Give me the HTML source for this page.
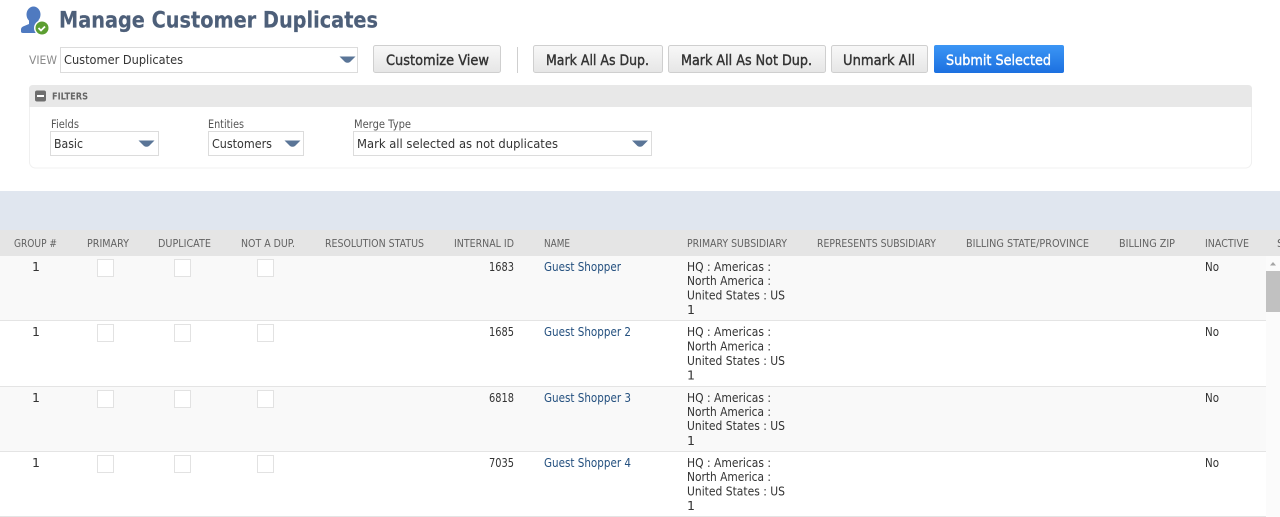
<!DOCTYPE html>
<html><head><meta charset="utf-8"><title>Manage Customer Duplicates</title>
<style>
html,body{margin:0;padding:0;background:#fff;width:1280px;height:517px;overflow:hidden}
svg{display:block}
text{font-family:"DejaVu Sans","Liberation Sans",sans-serif;font-size:12.5px;fill:#333}
.h{font-size:11px;fill:#626262}
.l{fill:#24507f}
.b{font-size:14px;fill:#333;stroke:#333;stroke-width:.4}
.cb{fill:#fff;stroke:#e2e2e2}
</style></head><body>
<svg xmlns="http://www.w3.org/2000/svg" width="1280" height="517" viewBox="0 0 1280 517">
<defs>
<linearGradient id="g" x1="0" y1="0" x2="0" y2="1"><stop offset="0" stop-color="#f8f8f8"/><stop offset="1" stop-color="#e6e6e6"/></linearGradient>
<linearGradient id="bl" x1="0" y1="0" x2="0" y2="1"><stop offset="0" stop-color="#3c96f5"/><stop offset="1" stop-color="#1c70e0"/></linearGradient>
</defs>
<!-- icon -->
<ellipse cx="33.500" cy="14.500" rx="7" ry="8" fill="#4f7ac0"/>
<path d="M29 19h9l1 4 5 2v6.500q0 1.500-2 1.500H23q-2 0-2-1.500v-2q0-2 2-3l6-2.500z" fill="#4f7ac0"/>
<circle cx="42" cy="28" r="8" fill="#fff"/>
<circle cx="42" cy="28" r="6.500" fill="#5c9e31"/>
<path d="M38.500 28l2.500 2.500 4-4" fill="none" stroke="#fff" stroke-width="1.800"/>
<text x="59" y="27.500" textLength="319" lengthAdjust="spacingAndGlyphs" style="font-size:22.500px;font-weight:bold;fill:#4d5f79;stroke:#4d5f79;stroke-width:.2">Manage Customer Duplicates</text>

<!-- toolbar -->
<text x="29" y="64" textLength="28" lengthAdjust="spacingAndGlyphs" style="fill:#8a8a8a;font-size:11.500px">VIEW</text>
<rect x="60.500" y="47.500" width="297" height="25" fill="#fff" stroke="#dcdcdc"/>
<text x="64" y="64" textLength="119" lengthAdjust="spacingAndGlyphs">Customer Duplicates</text>
<path d="M339.500 56.500h16l-5.500 5.500q-2.500 1.500-5 0z" fill="#5a7597"/>
<rect x="373.500" y="45.500" width="127" height="27" rx="2" fill="url(#g)" stroke="#cfcfcf"/>
<text class="b" x="386" y="65" textLength="103" lengthAdjust="spacingAndGlyphs">Customize View</text>
<rect x="517" y="47" width="1" height="26" fill="#cfcfcf"/>
<rect x="533.500" y="45.500" width="129" height="27" rx="2" fill="url(#g)" stroke="#cfcfcf"/>
<text class="b" x="546" y="65" textLength="103" lengthAdjust="spacingAndGlyphs">Mark All As Dup.</text>
<rect x="668.500" y="45.500" width="157" height="27" rx="2" fill="url(#g)" stroke="#cfcfcf"/>
<text class="b" x="681" y="65" textLength="131" lengthAdjust="spacingAndGlyphs">Mark All As Not Dup.</text>
<rect x="831.500" y="45.500" width="96" height="27" rx="2" fill="url(#g)" stroke="#cfcfcf"/>
<text class="b" x="843" y="65" textLength="72" lengthAdjust="spacingAndGlyphs">Unmark All</text>
<rect x="934" y="45" width="130" height="28" rx="2" fill="url(#bl)"/>
<text class="b" x="946" y="65" textLength="105" lengthAdjust="spacingAndGlyphs" style="fill:#fff;stroke:#fff">Submit Selected</text>

<!-- filters -->
<rect x="29.500" y="90" width="1222" height="78" rx="6" fill="#fff" stroke="#f0f0f0"/>
<path d="M29 107V89q0-4 4-4h1215q4 0 4 4v18z" fill="#e8e8e8"/>
<rect x="35" y="90.500" width="11" height="11" rx="2" fill="#6e6e6e"/>
<rect x="37" y="95" width="7" height="2" fill="#fff"/>
<text x="52" y="99.500" textLength="36" lengthAdjust="spacingAndGlyphs" style="font-size:9.500px;font-weight:bold;fill:#666">FILTERS</text>
<text x="51" y="128" textLength="28" lengthAdjust="spacingAndGlyphs" style="font-size:11.500px;fill:#555">Fields</text>
<text x="208" y="128" textLength="36" lengthAdjust="spacingAndGlyphs" style="font-size:11.500px;fill:#555">Entities</text>
<text x="354" y="128" textLength="57" lengthAdjust="spacingAndGlyphs" style="font-size:11.500px;fill:#555">Merge Type</text>
<rect x="50.500" y="131.500" width="108" height="24" fill="#fff" stroke="#dcdcdc"/>
<text x="54" y="148" textLength="29" lengthAdjust="spacingAndGlyphs">Basic</text>
<path d="M138.500 140.500h16l-5.500 5.500q-2.500 1.500-5 0z" fill="#5a7597"/>
<rect x="208.500" y="131.500" width="95" height="24" fill="#fff" stroke="#dcdcdc"/>
<text x="212" y="148" textLength="60" lengthAdjust="spacingAndGlyphs">Customers</text>
<path d="M284.500 140.500h16l-5.500 5.500q-2.500 1.500-5 0z" fill="#5a7597"/>
<rect x="353.500" y="131.500" width="298" height="24" fill="#fff" stroke="#dcdcdc"/>
<text x="357" y="148" textLength="201" lengthAdjust="spacingAndGlyphs">Mark all selected as not duplicates</text>
<path d="M632 140.500h16l-5.500 5.500q-2.500 1.500-5 0z" fill="#5a7597"/>

<!-- band + header -->
<rect x="0" y="191" width="1280" height="39" fill="#e0e6ef"/>
<rect x="0" y="230" width="1280" height="26" fill="#e5e5e5"/>
<text class="h" x="14" y="247" textLength="43" lengthAdjust="spacingAndGlyphs">GROUP #</text>
<text class="h" x="87" y="247" textLength="42" lengthAdjust="spacingAndGlyphs">PRIMARY</text>
<text class="h" x="158" y="247" textLength="53" lengthAdjust="spacingAndGlyphs">DUPLICATE</text>
<text class="h" x="241" y="247" textLength="54" lengthAdjust="spacingAndGlyphs">NOT A DUP.</text>
<text class="h" x="325" y="247" textLength="99" lengthAdjust="spacingAndGlyphs">RESOLUTION STATUS</text>
<text class="h" x="454" y="247" textLength="60" lengthAdjust="spacingAndGlyphs">INTERNAL ID</text>
<text class="h" x="544" y="247" textLength="26" lengthAdjust="spacingAndGlyphs">NAME</text>
<text class="h" x="687" y="247" textLength="100" lengthAdjust="spacingAndGlyphs">PRIMARY SUBSIDIARY</text>
<text class="h" x="817" y="247" textLength="119" lengthAdjust="spacingAndGlyphs">REPRESENTS SUBSIDIARY</text>
<text class="h" x="966" y="247" textLength="123" lengthAdjust="spacingAndGlyphs">BILLING STATE/PROVINCE</text>
<text class="h" x="1119" y="247" textLength="56" lengthAdjust="spacingAndGlyphs">BILLING ZIP</text>
<text class="h" x="1205" y="247" textLength="44" lengthAdjust="spacingAndGlyphs">INACTIVE</text>
<text class="h" x="1277" y="247">S</text>

<!-- row backgrounds -->
<rect x="0" y="256" width="1266" height="64" fill="#f9f9f9"/>
<rect x="0" y="387" width="1266" height="64" fill="#f9f9f9"/>
<rect x="0" y="320" width="1266" height="1" fill="#e4e4e4"/>
<rect x="0" y="386" width="1266" height="1" fill="#e4e4e4"/>
<rect x="0" y="451" width="1266" height="1" fill="#e4e4e4"/>
<rect x="0" y="516" width="1266" height="1" fill="#e4e4e4"/>

<!-- row 1 -->
<text x="32" y="271">1</text>
<rect class="cb" x="97.500" y="259.500" width="16" height="17"/><rect class="cb" x="174.500" y="259.500" width="16" height="17"/><rect class="cb" x="257.500" y="259.500" width="16" height="17"/>
<text x="489" y="271" textLength="25" lengthAdjust="spacingAndGlyphs">1683</text>
<text class="l" x="544" y="271" textLength="77" lengthAdjust="spacingAndGlyphs">Guest Shopper</text>
<text x="687" y="271" textLength="84" lengthAdjust="spacingAndGlyphs">HQ : Americas :</text>
<text x="687" y="285" textLength="84" lengthAdjust="spacingAndGlyphs">North America :</text>
<text x="687" y="299.500" textLength="98" lengthAdjust="spacingAndGlyphs">United States : US</text>
<text x="687" y="314">1</text>
<text x="1205" y="271" textLength="14" lengthAdjust="spacingAndGlyphs">No</text>

<!-- row 2 -->
<text x="32" y="336">1</text>
<rect class="cb" x="97.500" y="324.500" width="16" height="17"/><rect class="cb" x="174.500" y="324.500" width="16" height="17"/><rect class="cb" x="257.500" y="324.500" width="16" height="17"/>
<text x="489" y="336" textLength="25" lengthAdjust="spacingAndGlyphs">1685</text>
<text class="l" x="544" y="336" textLength="87" lengthAdjust="spacingAndGlyphs">Guest Shopper 2</text>
<text x="687" y="336" textLength="84" lengthAdjust="spacingAndGlyphs">HQ : Americas :</text>
<text x="687" y="350.500" textLength="84" lengthAdjust="spacingAndGlyphs">North America :</text>
<text x="687" y="365" textLength="98" lengthAdjust="spacingAndGlyphs">United States : US</text>
<text x="687" y="379.500">1</text>
<text x="1205" y="336" textLength="14" lengthAdjust="spacingAndGlyphs">No</text>

<!-- row 3 -->
<text x="32" y="402">1</text>
<rect class="cb" x="97.500" y="390.500" width="16" height="17"/><rect class="cb" x="174.500" y="390.500" width="16" height="17"/><rect class="cb" x="257.500" y="390.500" width="16" height="17"/>
<text x="489" y="402" textLength="25" lengthAdjust="spacingAndGlyphs">6818</text>
<text class="l" x="544" y="402" textLength="87" lengthAdjust="spacingAndGlyphs">Guest Shopper 3</text>
<text x="687" y="402" textLength="84" lengthAdjust="spacingAndGlyphs">HQ : Americas :</text>
<text x="687" y="416" textLength="84" lengthAdjust="spacingAndGlyphs">North America :</text>
<text x="687" y="430" textLength="98" lengthAdjust="spacingAndGlyphs">United States : US</text>
<text x="687" y="445">1</text>
<text x="1205" y="402" textLength="14" lengthAdjust="spacingAndGlyphs">No</text>

<!-- row 4 -->
<text x="32" y="467">1</text>
<rect class="cb" x="97.500" y="455.500" width="16" height="17"/><rect class="cb" x="174.500" y="455.500" width="16" height="17"/><rect class="cb" x="257.500" y="455.500" width="16" height="17"/>
<text x="489" y="467" textLength="25" lengthAdjust="spacingAndGlyphs">7035</text>
<text class="l" x="544" y="467" textLength="87" lengthAdjust="spacingAndGlyphs">Guest Shopper 4</text>
<text x="687" y="467" textLength="84" lengthAdjust="spacingAndGlyphs">HQ : Americas :</text>
<text x="687" y="481" textLength="84" lengthAdjust="spacingAndGlyphs">North America :</text>
<text x="687" y="495.500" textLength="98" lengthAdjust="spacingAndGlyphs">United States : US</text>
<text x="687" y="510">1</text>
<text x="1205" y="467" textLength="14" lengthAdjust="spacingAndGlyphs">No</text>

<!-- scrollbar -->
<rect x="1266" y="256" width="14" height="261" fill="#fbfbfb"/>
<rect x="1266" y="271" width="14" height="41" fill="#c1c1c1"/>
<path d="M1270 265.500l3-3.500 3 3.500z" fill="#a5a5a5"/>
</svg>
</body></html>
